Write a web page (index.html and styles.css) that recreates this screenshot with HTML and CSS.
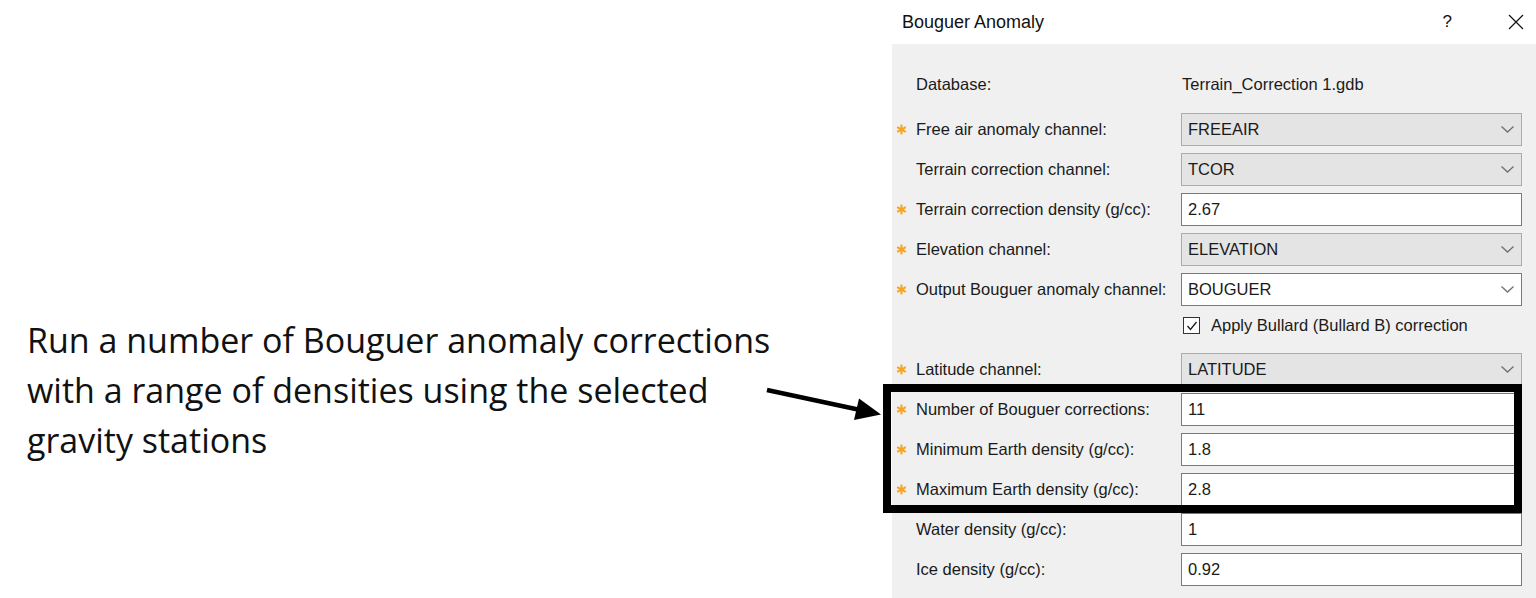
FILE: index.html
```html
<!DOCTYPE html>
<html>
<head>
<meta charset="utf-8">
<link rel="stylesheet" href="styles.css">
</head>
<body>
<div class="page">
  <div class="caption">
    <p>Run a number of Bouguer anomaly corrections<br>with a range of densities using the selected<br>gravity stations</p>
  </div>
  <div class="dialog">
    <div class="titlebar">
      <span class="title">Bouguer Anomaly</span>
      <span class="help">?</span>
      <svg class="close" width="16" height="16" viewBox="0 0 16 16"><path d="M1 1L15 15M15 1L1 15" stroke="#111" stroke-width="1.2" fill="none"/></svg>
    </div>
    <div class="form">
      <div class="row db">
        <div class="lbl"><span class="star"></span>Database:</div>
        <div class="value">Terrain_Correction 1.gdb</div>
      </div>
      <div class="row">
        <div class="lbl"><span class="star"><svg width="11" height="11" viewBox="0 0 10 10"><path d="M5 0.5V9.5M1.1 2.75L8.9 7.25M8.9 2.75L1.1 7.25" stroke="#f4a324" stroke-width="1.8"/></svg></span>Free air anomaly channel:</div>
        <div class="combo">FREEAIR<svg class="chev" width="13" height="7" viewBox="0 0 13 7"><path d="M0.5 0.5L6.5 6L12.5 0.5" stroke="#707070" stroke-width="1.3" fill="none"/></svg></div>
      </div>
      <div class="row">
        <div class="lbl"><span class="star"></span>Terrain correction channel:</div>
        <div class="combo">TCOR<svg class="chev" width="13" height="7" viewBox="0 0 13 7"><path d="M0.5 0.5L6.5 6L12.5 0.5" stroke="#707070" stroke-width="1.3" fill="none"/></svg></div>
      </div>
      <div class="row">
        <div class="lbl"><span class="star"><svg width="11" height="11" viewBox="0 0 10 10"><path d="M5 0.5V9.5M1.1 2.75L8.9 7.25M8.9 2.75L1.1 7.25" stroke="#f4a324" stroke-width="1.8"/></svg></span>Terrain correction density (g/cc):</div>
        <div class="input">2.67</div>
      </div>
      <div class="row">
        <div class="lbl"><span class="star"><svg width="11" height="11" viewBox="0 0 10 10"><path d="M5 0.5V9.5M1.1 2.75L8.9 7.25M8.9 2.75L1.1 7.25" stroke="#f4a324" stroke-width="1.8"/></svg></span>Elevation channel:</div>
        <div class="combo">ELEVATION<svg class="chev" width="13" height="7" viewBox="0 0 13 7"><path d="M0.5 0.5L6.5 6L12.5 0.5" stroke="#707070" stroke-width="1.3" fill="none"/></svg></div>
      </div>
      <div class="row">
        <div class="lbl"><span class="star"><svg width="11" height="11" viewBox="0 0 10 10"><path d="M5 0.5V9.5M1.1 2.75L8.9 7.25M8.9 2.75L1.1 7.25" stroke="#f4a324" stroke-width="1.8"/></svg></span>Output Bouguer anomaly channel:</div>
        <div class="combo edit">BOUGUER<svg class="chev" width="13" height="7" viewBox="0 0 13 7"><path d="M0.5 0.5L6.5 6L12.5 0.5" stroke="#707070" stroke-width="1.3" fill="none"/></svg></div>
      </div>
      <div class="row checkrow">
        <div class="lbl"></div>
        <div class="check"><span class="box"><svg width="14" height="14" viewBox="0 0 14 14"><path d="M2.5 7L5.5 10.5L11.5 3" stroke="#222" stroke-width="1.4" fill="none"/></svg></span>Apply Bullard (Bullard B) correction</div>
      </div>
      <div class="row">
        <div class="lbl"><span class="star"><svg width="11" height="11" viewBox="0 0 10 10"><path d="M5 0.5V9.5M1.1 2.75L8.9 7.25M8.9 2.75L1.1 7.25" stroke="#f4a324" stroke-width="1.8"/></svg></span>Latitude channel:</div>
        <div class="combo">LATITUDE<svg class="chev" width="13" height="7" viewBox="0 0 13 7"><path d="M0.5 0.5L6.5 6L12.5 0.5" stroke="#707070" stroke-width="1.3" fill="none"/></svg></div>
      </div>
      <div class="highlight">
        <div class="row">
          <div class="lbl"><span class="star"><svg width="11" height="11" viewBox="0 0 10 10"><path d="M5 0.5V9.5M1.1 2.75L8.9 7.25M8.9 2.75L1.1 7.25" stroke="#f4a324" stroke-width="1.8"/></svg></span>Number of Bouguer corrections:</div>
          <div class="input">11</div>
        </div>
        <div class="row">
          <div class="lbl"><span class="star"><svg width="11" height="11" viewBox="0 0 10 10"><path d="M5 0.5V9.5M1.1 2.75L8.9 7.25M8.9 2.75L1.1 7.25" stroke="#f4a324" stroke-width="1.8"/></svg></span>Minimum Earth density (g/cc):</div>
          <div class="input">1.8</div>
        </div>
        <div class="row">
          <div class="lbl"><span class="star"><svg width="11" height="11" viewBox="0 0 10 10"><path d="M5 0.5V9.5M1.1 2.75L8.9 7.25M8.9 2.75L1.1 7.25" stroke="#f4a324" stroke-width="1.8"/></svg></span>Maximum Earth density (g/cc):</div>
          <div class="input">2.8</div>
        </div>
      </div>
      <div class="row">
        <div class="lbl"><span class="star"></span>Water density (g/cc):</div>
        <div class="input">1</div>
      </div>
      <div class="row">
        <div class="lbl"><span class="star"></span>Ice density (g/cc):</div>
        <div class="input">0.92</div>
      </div>
    </div>
  </div>
  <svg class="arrow" width="125" height="40" viewBox="0 0 125 40">
    <path d="M7 5L98 24.5" stroke="#000" stroke-width="4.5" fill="none"/>
    <path d="M121 29.5L99 13.5L94 35Z" fill="#000"/>
  </svg>
</div>
</body>
</html>
```

FILE: styles.css
```css
html, body {
  margin: 0;
  padding: 0;
  background: #ffffff;
}

.page {
  position: relative;
  display: flex;
  width: 1536px;
  height: 598px;
  overflow: hidden;
}

.caption {
  width: 892px;
  flex: none;
  box-sizing: border-box;
  padding: 315px 0 0 27px;
}

.caption p {
  margin: 0;
  font-family: "Open Sans", sans-serif;
  font-size: 34px;
  line-height: 50px;
  color: #111;
  white-space: nowrap;
}

.dialog {
  flex: 1;
  display: flex;
  flex-direction: column;
  font-family: "Liberation Sans", Arial, sans-serif;
  font-size: 16.5px;
  color: #1a1a1a;
}

.titlebar {
  height: 44px;
  flex: none;
  display: flex;
  align-items: center;
  background: #ffffff;
  padding: 0 12px 0 10px;
}

.title {
  font-size: 18px;
  color: #111;
  flex: 1;
}

.help {
  font-size: 17px;
  color: #111;
  margin-right: 56px;
}

.close {
  display: block;
}

.form {
  flex: 1;
  background: #f0f0f0;
  display: flex;
  flex-direction: column;
  gap: 7px;
  padding: 24px 14px 0 0;
}

.row {
  display: grid;
  grid-template-columns: 289px 341px;
  height: 33px;
  align-items: center;
}

.row.db {
  margin-bottom: 5px;
}

.lbl {
  display: flex;
  align-items: center;
  white-space: nowrap;
}

.star {
  width: 24px;
  flex: none;
  display: flex;
  align-items: center;
  padding-left: 4px;
  box-sizing: border-box;
}

.star svg {
  display: block;
}

.value {
  padding-left: 1px;
}

.combo, .input {
  height: 33px;
  box-sizing: border-box;
  display: flex;
  align-items: center;
  padding: 0 7px 0 6px;
  white-space: nowrap;
}

.combo {
  background: #e4e4e4;
  border: 1px solid #acacac;
}

.combo.edit {
  background: #ffffff;
  border-color: #7a7a7a;
}

.input {
  background: #ffffff;
  border: 1px solid #7a7a7a;
}

.chev {
  margin-left: auto;
  display: block;
}

.checkrow {
  align-items: start;
}

.check {
  display: flex;
  align-items: center;
  padding-top: 3px;
}

.box {
  width: 17px;
  height: 17px;
  box-sizing: border-box;
  border: 1px solid #333;
  background: #fff;
  display: flex;
  align-items: center;
  justify-content: center;
  margin: 0 11px 0 2px;
}

.highlight {
  position: relative;
  display: flex;
  flex-direction: column;
  gap: 7px;
}

.highlight::after {
  content: "";
  position: absolute;
  left: -9px;
  top: -9px;
  right: 0;
  bottom: -7px;
  border: 8px solid #000;
  pointer-events: none;
}

.arrow {
  position: absolute;
  left: 760px;
  top: 385px;
}
```
